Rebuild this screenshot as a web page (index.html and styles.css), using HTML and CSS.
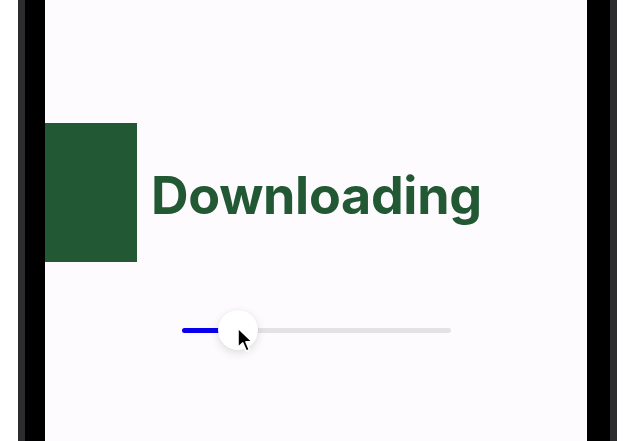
FILE: index.html
```html
<!DOCTYPE html>
<html lang="en">
<head>
    <meta charset="UTF-8">
    <meta name="viewport" content="width=device-width, initial-scale=1.0">
    <title>Downloading</title>
    <link rel="stylesheet" href="styles.css">
</head>
<body>
    <div class="device">
        <div class="bezel">
            <main class="screen">
                <div class="banner">
                    <div class="swatch"></div>
                    <h1 class="title">Downloading</h1>
                </div>

                <div class="slider">
                    <div class="track">
                        <div class="fill" style="width: 21%"></div>
                        <div class="thumb" style="left: 21%">
                            <!-- mouse pointer hovering the thumb -->
                            <svg class="pointer" width="19" height="28" viewBox="0 0 16 24">
                                <path d="M1.5 1.5 L1.5 18.5 L5.6 14.6 L8.6 21.6 L11.4 20.4 L8.5 13.6 L14 13.6 Z"
                                      fill="#000" stroke="#fff" stroke-width="1.5" stroke-linejoin="round"/>
                            </svg>
                        </div>
                    </div>
                </div>
            </main>
        </div>
    </div>
</body>
</html>
```

FILE: styles.css
```css
/* Page */
html, body {
    margin: 0;
    height: 100%;
    overflow: hidden;
    background-color: #ffffff;
}

body {
    font-family: Inter, "Noto Sans", sans-serif;
    padding-left: 18px;
}

/* Device frame: grey rim, black bezel, screen */
.device {
    width: 599px;
    height: 100%;
    box-sizing: border-box;
    border-left: 7px solid #2c2c2e;
    border-right: 7px solid #2c2c2e;
    background-color: #000;
}

.bezel {
    height: 100%;
    padding: 0 23px 0 20px;
}

.screen {
    height: 100%;
    background-color: #fdfbfe;
    padding-top: 123px;
    box-sizing: border-box;
}

/* Heading row */
.banner {
    display: flex;
    align-items: center;
    gap: 14px;
}

.swatch {
    width: 92px;
    height: 139px;
    background-color: #225834;
}

.title {
    margin: 0;
    font-size: 52px;
    font-weight: 700;
    letter-spacing: -0.3px;
    color: #225834;
    line-height: 1;
    padding-top: 6px;
}

/* Slider */
.slider {
    display: flex;
    justify-content: center;
    margin-top: 66px;
}

.track {
    position: relative;
    width: 269px;
    height: 5px;
    border-radius: 3px;
    background-color: #e4e2e5;
}

.fill {
    height: 100%;
    border-radius: 3px;
    background-color: #0a00f0;
}

.thumb {
    position: absolute;
    top: 50%;
    width: 40px;
    height: 40px;
    margin: -21px 0 0 -20px;
    border-radius: 50%;
    background-color: #ffffff;
    box-shadow: 0 3px 10px rgba(0, 0, 0, 0.12), 0 0 2px rgba(0, 0, 0, 0.06);
}

.pointer {
    position: absolute;
    left: 18px;
    top: 16px;
}
```
